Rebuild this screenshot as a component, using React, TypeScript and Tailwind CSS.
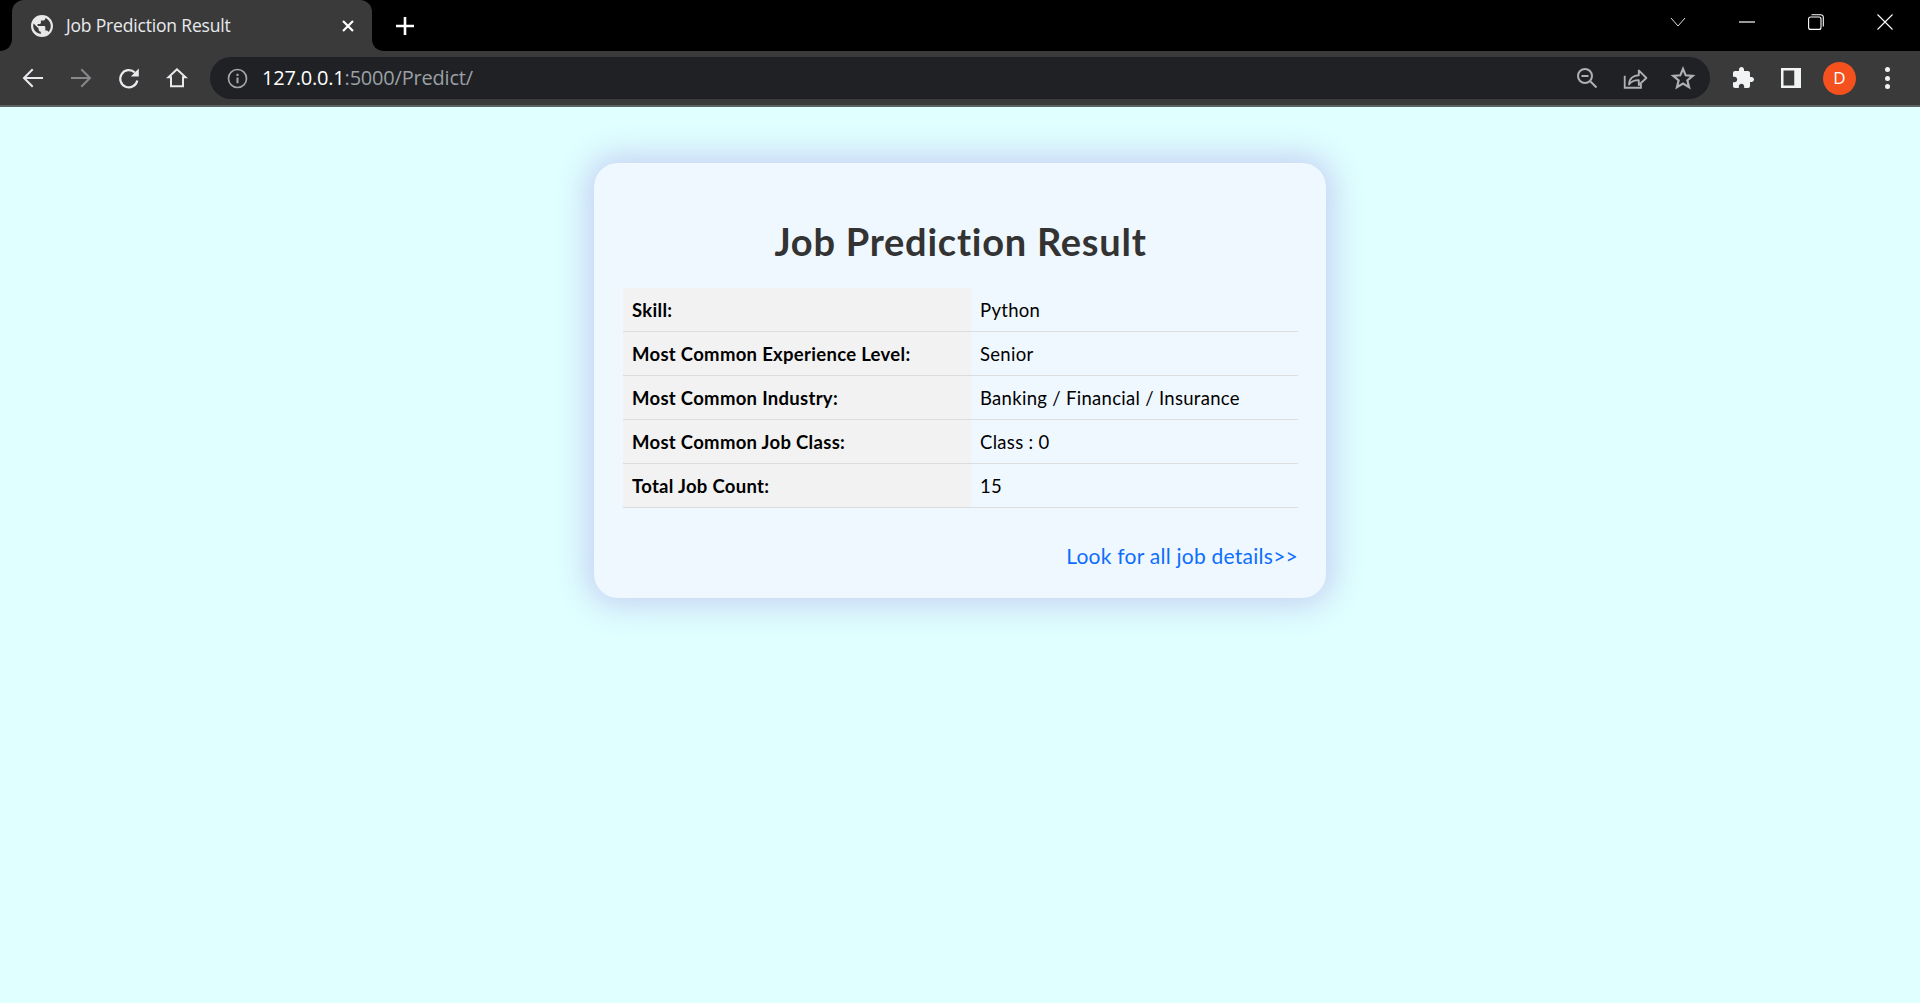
const ui = { fontFamily: '"Open Sans", "Noto Sans", sans-serif' };

function Ic({ d, cls = "", size = 24, fill = "currentColor" }: { d: string; cls?: string; size?: number; fill?: string }) {
  return (
    <svg width={size} height={size} viewBox="0 0 24 24" fill={fill} className={cls}>
      <path d={d} />
    </svg>
  );
}

const PUZZLE = "M20.5 11H19V7c0-1.1-.9-2-2-2h-4V3.5C13 2.12 11.88 1 10.5 1S8 2.12 8 3.5V5H4c-1.1 0-1.99.9-1.99 2v3.8H3.5c1.49 0 2.7 1.21 2.7 2.7s-1.21 2.7-2.7 2.7H2V20c0 1.1.9 2 2 2h3.8v-1.5c0-1.49 1.21-2.7 2.7-2.7 1.49 0 2.7 1.21 2.7 2.7V22H17c1.1 0 2-.9 2-2v-4h1.5c1.38 0 2.5-1.12 2.5-2.5S21.88 11 20.5 11z";

const rows: [string, string][] = [
  ["Skill:", "Python"],
  ["Most Common Experience Level:", "Senior"],
  ["Most Common Industry:", "Banking / Financial / Insurance"],
  ["Most Common Job Class:", "Class : 0"],
  ["Total Job Count:", "15"],
];

function Arrow({ cls = "" }: { cls?: string }) {
  return (
    <svg width="24" height="24" viewBox="0 0 24 24" fill="none" stroke="currentColor" strokeWidth="2" className={cls}>
      <path d="M22 12H4M11.700 3.300L3 12l8.700 8.700" />
    </svg>
  );
}

function Flare({ side }: { side: "l" | "r" }) {
  return (
    <svg
      width="12"
      height="12"
      viewBox="0 0 12 12"
      className={side === "l" ? "absolute bottom-0 left-[-12px]" : "absolute bottom-0 right-[-12px]"}
    >
      <path d={side === "l" ? "M12 0v12H0C7 12 12 7 12 0z" : "M0 0v12h12C5 12 0 7 0 0z"} fill="#3a3a3b" />
    </svg>
  );
}

function TopBar() {
  return (
    <div className="h-[51px] bg-black flex items-end pl-[12px] shrink-0" style={ui}>
      <div className="relative w-[360px] h-[51px] bg-[#3a3a3b] rounded-t-[12px] flex items-center pl-[18px] pr-[17px]">
        <Flare side="l" />
        <Flare side="r" />
        <svg width="24" height="24" viewBox="0 0 24 24" className="text-[#e8e8e8] shrink-0">
          <path
            fill="currentColor"
            d="M12 1C5.9 1 1 5.900 1 12s4.900 11 11 11 11-4.900 11-11S18.100 1 12 1zM3.200 12c0-.9.100-1.700.4-2.500l5 5v1.100c0 1.200 1 2.200 2.200 2.200v2.100C6.400 19.400 3.200 16 3.200 12zm15.300 6c-.3-.9-1.100-1.500-2.100-1.500h-1.100v-3.300c0-.6-.5-1.100-1.100-1.100H7.600v-2.200h2.200c.6 0 1.100-.5 1.100-1.100V6.600h2.200c1.200 0 2.200-1 2.200-2.200V4c3.200 1.300 5.500 4.400 5.500 8 0 2.300-.9 4.400-2.300 6z"
          />
        </svg>
        <span className="ml-[12px] text-[17.500px] text-[#e8eaed] tracking-[-0.18px] whitespace-nowrap">Job Prediction Result</span>
        <svg width="14" height="14" viewBox="0 0 14 14" className="ml-auto text-white">
          <path d="M2 2l10 10M12 2L2 12" stroke="currentColor" strokeWidth="2.200" />
        </svg>
      </div>
      <div className="ml-[23px] h-[51px] flex items-center">
        <svg width="20" height="20" viewBox="0 0 20 20" className="text-white">
          <path d="M10 1v18M1 10h18" stroke="currentColor" strokeWidth="2.600" />
        </svg>
      </div>
      <div className="ml-auto flex items-center h-[42px] self-start text-white">
        <div className="w-[68px] flex justify-center pt-[2px]">
          <svg width="16" height="10" viewBox="0 0 16 10"><path d="M1 1l7 8 7-8" fill="none" stroke="#e0e0e0" strokeWidth="1" /></svg>
        </div>
        <div className="w-[69px] flex justify-center pt-[2px]">
          <svg width="16" height="2" viewBox="0 0 16 2"><path d="M0 1h16" stroke="#fff" strokeWidth="1.200" /></svg>
        </div>
        <div className="w-[69px] flex justify-center pt-[2px]">
          <svg width="16" height="16" viewBox="0 0 16 16" fill="none" stroke="#fff" strokeWidth="1.100">
            <rect x="0.600" y="3" width="12.400" height="12.400" rx="2" />
            <path d="M3.500 0.700h9.300a2.500 2.500 0 0 1 2.500 2.500v9.300" />
          </svg>
        </div>
        <div className="w-[70px] flex justify-center pt-[2px] pr-[1px]">
          <svg width="16" height="16" viewBox="0 0 16 16"><path d="M0.500 0.500l15 15M15.500 0.500l-15 15" stroke="#fff" strokeWidth="1.100" /></svg>
        </div>
      </div>
    </div>
  );
}

function Toolbar() {
  return (
    <div className="h-[56px] bg-[#3a3a3b] border-b-[2px] border-[#5f6164] flex items-center shrink-0" style={ui}>
      <div className="w-[210px] pl-[21px] flex items-center gap-[24px] shrink-0 text-[#e8eaed]">
        <Arrow />
        <Arrow cls="rotate-180 text-[#86888b]" />
        <svg width="24" height="24" viewBox="0 0 24 24" fill="none" stroke="currentColor" strokeWidth="2.200">
          <path d="M17.800 6.500A8.600 8.600 0 1 0 20.300 14.500" />
          <path d="M21.800 2.500v8h-8z" fill="currentColor" stroke="none" />
        </svg>
        <svg width="24" height="24" viewBox="0 0 24 24" fill="none" stroke="currentColor" strokeWidth="2">
          <path d="M12 3.300L3.500 11.300h2.500v9h12v-9h2.500z" strokeLinejoin="miter" />
        </svg>
      </div>
      <div className="w-[1500px] h-[42px] rounded-full bg-[#202124] flex items-center pl-[17px] pr-[15px] shrink-0">
        <svg width="21" height="21" viewBox="0 0 20 20" className="text-[#a4a6a9] shrink-0">
          <circle cx="10" cy="10" r="8.600" fill="none" stroke="currentColor" strokeWidth="1.600" />
          <path d="M9 9h2v5.500H9zM9 5.500h2v2H9z" fill="currentColor" />
        </svg>
        <span className="ml-[14px] text-[20px] tracking-[-0.2px] whitespace-nowrap text-white">
          127.0.0.1<span className="text-[#9aa0a6]">:5000/Predict/</span>
        </span>
        <div className="ml-auto flex items-center gap-[22px] text-[#aeb0b3]">
          <svg width="24" height="24" viewBox="0 0 24 24" fill="none" stroke="currentColor" strokeWidth="2">
            <circle cx="10" cy="10" r="7" />
            <path d="M15 15l6.500 6.500M6.500 10h7" />
          </svg>
          <svg width="26" height="26" viewBox="0 0 24 24" fill="none" stroke="currentColor" strokeWidth="1.700" className="translate-x-[1px]">
            <path d="M2.500 10v11h15v-3.500" />
            <path d="M6.500 18c0-5.500 4-8.500 9-8.500V5l7 7-7 6.500v-4.500c-4 0-7 1-9 4z" strokeLinejoin="round" />
          </svg>
          <svg width="26" height="26" viewBox="0 0 24 24" fill="none" stroke="currentColor" strokeWidth="2" className="translate-x-[1px]">
            <path d="M12 3.500l2.500 6 6.500.5-5 4.200 1.600 6.300-5.600-3.400-5.600 3.400 1.600-6.300-5-4.200 6.500-.5z" strokeLinejoin="miter" />
          </svg>
        </div>
      </div>
      <div className="flex-1 flex items-center pl-[21px] gap-[24px] text-[#f1f3f4]">
        <Ic d={PUZZLE} />
        <svg width="24" height="24" viewBox="0 0 24 24">
          <path fillRule="evenodd" d="M2 2h20v20H2zM4.500 4.500v15H15.500v-15z" fill="currentColor" />
          <path d="M15.500 4.500h4v15h-4z" fill="#f1f3f4" />
        </svg>
        <div className="w-[33px] h-[33px] rounded-full bg-[#f4511e] text-white text-[17px] flex items-center justify-center shrink-0 ml-[-4px]">D</div>
        <div className="flex flex-col gap-[3.500px] ml-[5px]">
          <span className="w-[5px] h-[5px] rounded-full bg-[#f1f3f4]" />
          <span className="w-[5px] h-[5px] rounded-full bg-[#f1f3f4]" />
          <span className="w-[5px] h-[5px] rounded-full bg-[#f1f3f4]" />
        </div>
      </div>
    </div>
  );
}

export default function App() {
  return (
    <div className="w-[1920px] h-[1003px] flex flex-col overflow-hidden bg-[#e0ffff]">
      <TopBar />
      <Toolbar />
      <main className="flex-1 flex justify-center items-start pt-[56px]" style={{ fontFamily: 'Lato, "Open Sans", sans-serif' }}>
        <div className="w-[732px] h-[435px] rounded-[24px] bg-[#f0f8ff] shadow-[0_0_30px_8px_rgba(139,110,215,0.3)] pl-[29px] pr-[28px] pt-[56px] flex flex-col">
          <h1 className="h-[42px] text-center text-[38px] leading-[44px] font-bold text-[#333] tracking-[0.75px] whitespace-nowrap">Job Prediction Result</h1>
          <div className="mt-[27px] flex flex-col text-black text-[18.500px]">
            {rows.map(([k, v]) => (
              <div key={k} className="h-[44px] flex border-b border-[#dddddd]">
                <div className="w-[348px] bg-[#f2f2f2] pl-[9px] pt-[2px] flex items-center font-bold tracking-[0.3px] whitespace-nowrap">{k}</div>
                <div className="flex-1 pl-[9px] pt-[2px] flex items-center tracking-[0.3px] whitespace-nowrap">{v}</div>
              </div>
            ))}
          </div>
          <div className="mt-[32px] text-right">
            <a href="#" className="text-[#0d6efd] text-[21px] tracking-[0.25px] whitespace-nowrap">Look for all job details&gt;&gt;</a>
          </div>
        </div>
      </main>
    </div>
  );
}
